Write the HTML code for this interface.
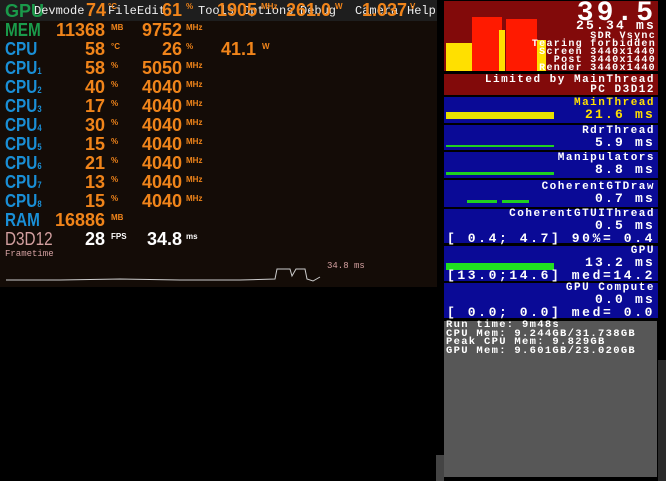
<!DOCTYPE html>
<html><head><meta charset="utf-8"><style>
*{margin:0;padding:0;box-sizing:border-box}
body{width:666px;height:481px;background:#000;position:relative;overflow:hidden;font-family:"Liberation Sans",sans-serif}
.a{position:absolute;white-space:nowrap}
#ov{position:absolute;left:0;top:0;width:437px;height:287px;background:#140c07}
#bar{position:absolute;left:0;top:0;width:437px;height:21px;background:#1e1e1e}
.lb{font-weight:bold;font-size:18px;color:#1a8fd6;transform:scaleX(.85);transform-origin:left}
.v{font-weight:bold;font-size:18px;color:#f0841a;text-align:right}
.u{font-weight:bold;font-size:8px;color:#f0841a}
.mn{font-size:12px;color:#eee;font-family:'Liberation Mono',monospace;top:4px}
.m{font-family:"Liberation Mono",monospace;font-weight:bold;color:#fff;text-align:right;font-size:11px;letter-spacing:1.5px;margin-right:-1.5px}
.m b{font-size:13px;letter-spacing:2.2px}
.m i{font-style:normal;font-size:13px;letter-spacing:2.6px}
.box{position:absolute;left:444px;width:214px}
.bl{background:#0a0a96}
.rd{background:#820a0a}
</style></head><body>
<div id="ov"></div>
<div id="bar"></div>
<div class="a" style="left:5px;top:1px;font-size:18px;font-weight:bold;color:#1a9a4a">GPU</div>
<div class="a mn" style="left:34px">Devmode</div>
<div class="a mn" style="left:108px">File</div>
<div class="a mn" style="left:137px">Edit</div>
<div class="a mn" style="left:198px">Tools</div>
<div class="a mn" style="left:243px">Options</div>
<div class="a mn" style="left:300px">Debug</div>
<div class="a mn" style="left:355px">Camera</div>
<div class="a mn" style="left:407px">Help</div>
<div class="a v" style="left:80px;top:0;width:26px">74</div><div class="a u" style="left:108px;top:2px">°C</div>
<div class="a v" style="left:150px;top:0;width:32px">61</div><div class="a u" style="left:186px;top:2px">%</div>
<div class="a v" style="left:205px;top:0;width:52px">1905</div><div class="a u" style="left:261px;top:2px">MHz</div>
<div class="a v" style="left:276px;top:0;width:55px">261.0</div><div class="a u" style="left:335px;top:2px">W</div>
<div class="a v" style="left:350px;top:0;width:57px">1.037</div><div class="a u" style="left:410px;top:2px">V</div>

<div class="a lb" style="left:5px;top:20px;color:#1a9a4a">MEM</div>
<div class="a v" style="left:40px;top:20px;width:65px">11368</div><div class="a u" style="left:111px;top:23px">MB</div>
<div class="a v" style="left:120px;top:20px;width:62px">9752</div><div class="a u" style="left:186px;top:23px">MHz</div>

<div class="a lb" style="left:5px;top:39px">CPU</div>
<div class="a v" style="left:60px;top:39px;width:45px">58</div><div class="a u" style="left:111px;top:42px">°C</div>
<div class="a v" style="left:140px;top:39px;width:42px">26</div><div class="a u" style="left:186px;top:42px">%</div>
<div class="a v" style="left:205px;top:39px;width:51px">41.1</div><div class="a u" style="left:262px;top:42px">W</div>

<div class="a lb" style="left:5px;top:58px">CPU<small style="font-size:9px">1</small></div>
<div class="a v" style="left:60px;top:58px;width:45px">58</div><div class="a u" style="left:111px;top:61px">%</div>
<div class="a v" style="left:120px;top:58px;width:62px">5050</div><div class="a u" style="left:186px;top:61px">MHz</div>
<div class="a lb" style="left:5px;top:77px">CPU<small style="font-size:9px">2</small></div>
<div class="a v" style="left:60px;top:77px;width:45px">40</div><div class="a u" style="left:111px;top:80px">%</div>
<div class="a v" style="left:120px;top:77px;width:62px">4040</div><div class="a u" style="left:186px;top:80px">MHz</div>
<div class="a lb" style="left:5px;top:96px">CPU<small style="font-size:9px">3</small></div>
<div class="a v" style="left:60px;top:96px;width:45px">17</div><div class="a u" style="left:111px;top:99px">%</div>
<div class="a v" style="left:120px;top:96px;width:62px">4040</div><div class="a u" style="left:186px;top:99px">MHz</div>
<div class="a lb" style="left:5px;top:115px">CPU<small style="font-size:9px">4</small></div>
<div class="a v" style="left:60px;top:115px;width:45px">30</div><div class="a u" style="left:111px;top:118px">%</div>
<div class="a v" style="left:120px;top:115px;width:62px">4040</div><div class="a u" style="left:186px;top:118px">MHz</div>
<div class="a lb" style="left:5px;top:134px">CPU<small style="font-size:9px">5</small></div>
<div class="a v" style="left:60px;top:134px;width:45px">15</div><div class="a u" style="left:111px;top:137px">%</div>
<div class="a v" style="left:120px;top:134px;width:62px">4040</div><div class="a u" style="left:186px;top:137px">MHz</div>
<div class="a lb" style="left:5px;top:153px">CPU<small style="font-size:9px">6</small></div>
<div class="a v" style="left:60px;top:153px;width:45px">21</div><div class="a u" style="left:111px;top:156px">%</div>
<div class="a v" style="left:120px;top:153px;width:62px">4040</div><div class="a u" style="left:186px;top:156px">MHz</div>
<div class="a lb" style="left:5px;top:172px">CPU<small style="font-size:9px">7</small></div>
<div class="a v" style="left:60px;top:172px;width:45px">13</div><div class="a u" style="left:111px;top:175px">%</div>
<div class="a v" style="left:120px;top:172px;width:62px">4040</div><div class="a u" style="left:186px;top:175px">MHz</div>
<div class="a lb" style="left:5px;top:191px">CPU<small style="font-size:9px">8</small></div>
<div class="a v" style="left:60px;top:191px;width:45px">15</div><div class="a u" style="left:111px;top:194px">%</div>
<div class="a v" style="left:120px;top:191px;width:62px">4040</div><div class="a u" style="left:186px;top:194px">MHz</div>
<div class="a lb" style="left:5px;top:210px">RAM</div>
<div class="a v" style="left:40px;top:210px;width:65px">16886</div><div class="a u" style="left:111px;top:213px">MB</div>
<div class="a lb" style="left:5px;top:229px;color:#d4a0a0;font-weight:normal">D3D12</div>
<div class="a v" style="left:60px;top:229px;width:45px;color:#fff">28</div><div class="a u" style="left:111px;top:232px;color:#fff">FPS</div>
<div class="a v" style="left:130px;top:229px;width:52px;color:#fff">34.8</div><div class="a u" style="left:186px;top:232px;color:#fff">ms</div>
<div class="a" style="left:5px;top:249px;font-size:9px;color:#d4a0a0;font-family:'Liberation Mono',monospace">Frametime</div>
<div class="a" style="left:327px;top:261px;font-size:9px;color:#d4a0a0;font-family:'Liberation Mono',monospace">34.8 ms</div>
<svg class="a" style="left:0;top:260px" width="330" height="25"><polyline fill="none" stroke="#ccc" stroke-width="1" points="6,20 60,20 120,19 180,20 240,20 275,19 277,9 290,9 292,16 296,9 305,9 307,19 313,21 320,17"/></svg>

<!-- right column -->
<div class="box rd" style="top:1px;height:70px"></div>
<svg class="a" style="left:446px;top:15px" width="100" height="56">
<rect x="0" y="28" width="26" height="28" fill="#ffe000"/>
<rect x="26" y="2" width="30" height="54" fill="#ff1a00"/>
<rect x="53" y="15" width="6" height="41" fill="#ffe000"/>
<rect x="60" y="4" width="31" height="52" fill="#ff1a00"/>
<rect x="91" y="25" width="9" height="31" fill="#ffe000"/>
</svg>
<div class="a m" style="left:540px;top:-2px;width:116px;font-size:28px;letter-spacing:3px;margin:0">39.5</div>
<div class="a m" style="left:500px;top:19px;width:156px;font-size:13px;letter-spacing:2.2px;line-height:14px">25.34 ms</div>
<div class="a m" style="left:470px;top:33px;width:186px;font-size:10px;letter-spacing:1.3px;line-height:8px">SDR Vsync<br>Tearing forbidden<br>Screen 3440x1440<br>Post 3440x1440<br>Render 3440x1440</div>
<div class="box rd" style="top:74px;height:21px"></div>
<div class="a m" style="left:446px;top:75px;width:209px;line-height:10px">Limited by MainThread<br>PC D3D12</div>

<div class="box bl" style="top:97px;height:26px"></div>
<div class="a" style="left:446px;top:112px;width:108px;height:7px;background:#e8e000"></div>
<div class="a m" style="left:446px;top:97px;width:209px;line-height:12px;color:#ffe000">MainThread<br><b>21.6 ms</b></div>
<div class="box bl" style="top:125px;height:25px"></div>
<div class="a" style="left:446px;top:145px;width:108px;height:2px;background:#20d020"></div>
<div class="a m" style="left:446px;top:125px;width:209px;line-height:12px">RdrThread<br><b>5.9 ms</b></div>
<div class="box bl" style="top:152px;height:26px"></div>
<div class="a" style="left:446px;top:172px;width:108px;height:3px;background:#20d020"></div>
<div class="a m" style="left:446px;top:152px;width:209px;line-height:12px">Manipulators<br><b>8.8 ms</b></div>
<div class="box bl" style="top:180px;height:27px"></div>
<div class="a" style="left:467px;top:200px;width:30px;height:3px;background:#20d020"></div>
<div class="a" style="left:502px;top:200px;width:27px;height:3px;background:#20d020"></div>
<div class="a m" style="left:446px;top:181px;width:209px;line-height:12px">CoherentGTDraw<br><b>0.7 ms</b></div>
<div class="box bl" style="top:209px;height:34px"></div>
<div class="a m" style="left:430px;top:209px;width:225px;line-height:11px">CoherentGTUIThread<br><b>0.5 ms</b><br><i>[ 0.4; 4.7] 90%= 0.4</i></div>
<div class="box bl" style="top:246px;height:35px"></div>
<div class="a" style="left:446px;top:263px;width:108px;height:7px;background:#20e020"></div>
<div class="a m" style="left:430px;top:246px;width:225px;line-height:11px">GPU<br><b>13.2 ms</b><br><i>[13.0;14.6] med=14.2</i></div>
<div class="box bl" style="top:283px;height:35px"></div>
<div class="a m" style="left:430px;top:283px;width:225px;line-height:11px">GPU Compute<br><b>0.0 ms</b><br><i>[ 0.0; 0.0] med= 0.0</i></div>
<div class="box" style="top:321px;height:156px;background:#575757;left:444px;width:213px"></div>
<div class="a" style="left:446px;top:321px;font-family:'Liberation Mono',monospace;font-weight:bold;color:#fff;font-size:10.5px;letter-spacing:1.3px;line-height:8.5px">Run time: 9m48s<br>CPU Mem: 9.244GB/31.738GB<br>Peak CPU Mem: 9.829GB<br>GPU Mem: 9.601GB/23.020GB</div>
<div class="a" style="left:658px;top:360px;width:8px;height:121px;background:#2a2a2a"></div>
<div class="a" style="left:436px;top:455px;width:8px;height:26px;background:#444"></div>
</body></html>
